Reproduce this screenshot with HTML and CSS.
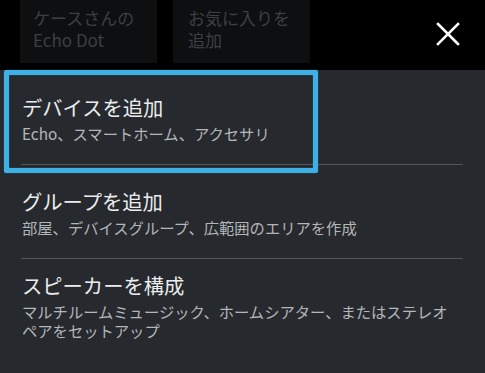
FILE: index.html
```
<!DOCTYPE html>
<html lang="ja">
<head>
<meta charset="utf-8">
<link rel="stylesheet" href="styles.css">
</head>
<body>
<div class="screen">
  <header class="topbar">
    <div class="card"><span class="card-line">ケースさんの</span><span class="card-line">Echo Dot</span></div>
    <div class="card card-second"><span class="card-line">お気に入りを</span><span class="card-line">追加</span></div>
    <button class="close" aria-label="閉じる">
      <svg width="24" height="24" viewBox="0 0 24 24"><path d="M2 2 L22 22 M22 2 L2 22" stroke="#ffffff" stroke-width="2.6" stroke-linecap="square" fill="none"/></svg>
    </button>
  </header>
  <main class="panel">
    <div class="item">
      <div class="title">デバイスを追加</div>
      <div class="sub">Echo、スマートホーム、アクセサリ</div>
    </div>
    <div class="item">
      <div class="title">グループを追加</div>
      <div class="sub">部屋、デバイスグループ、広範囲のエリアを作成</div>
    </div>
    <div class="item item-last">
      <div class="title">スピーカーを構成</div>
      <div class="sub">マルチルームミュージック、ホームシアター、またはステレオペアをセットアップ</div>
    </div>
    <div class="highlight"></div>
  </main>
</div>
</body>
</html>
```
FILE: styles.css
```
* { box-sizing: border-box; }
html, body { margin: 0; padding: 0; }
body {
  width: 485px;
  height: 373px;
  overflow: hidden;
  background: #262a2f;
  font-family: "Noto Sans CJK JP", "Noto Sans", sans-serif;
}
.screen { position: relative; width: 485px; height: 373px; }
.topbar {
  height: 70px;
  background: #000000;
  display: flex;
  align-items: flex-start;
  padding-left: 20px;
  gap: 16px;
  position: relative;
}
.card {
  width: 137px;
  height: 63px;
  background: #0e0f11;
  color: #3c3f43;
  font-size: 17px;
  padding: 7px 0 0 13px;
  white-space: nowrap;
  display: flex;
  flex-direction: column;
}
.card-line { display: block; height: 22px; line-height: 22px; }
.card-second { padding-left: 15px; }
.close {
  position: absolute;
  left: 436px;
  top: 22px;
  width: 24px;
  height: 24px;
  padding: 0;
  border: 0;
  background: transparent;
  display: block;
}
.close svg { display: block; }
.panel {
  position: relative;
  background: #262a2f;
  padding: 1px 22px 0 21px;
}
.item {
  min-height: 94px;
  border-bottom: 1px solid #53575c;
  display: flex;
  flex-direction: column;
  justify-content: center;
  padding-left: 1px;
}
.item-last { border-bottom: 0; min-height: 93px; }
.title {
  color: #ececec;
  font-size: 20.3px;
  line-height: 28px;
}
.sub {
  margin-top: 3px;
  color: #b4b6b8;
  font-size: 15.3px;
  line-height: 19px;
  max-width: 432px;
}
.highlight {
  position: absolute;
  left: 4px;
  top: 0;
  width: 314px;
  height: 103px;
  border: 5px solid #3db0e4;
  border-radius: 2px;
  box-shadow: 0 0 1px #3db0e4, inset 0 0 1px #3db0e4;
}
```
